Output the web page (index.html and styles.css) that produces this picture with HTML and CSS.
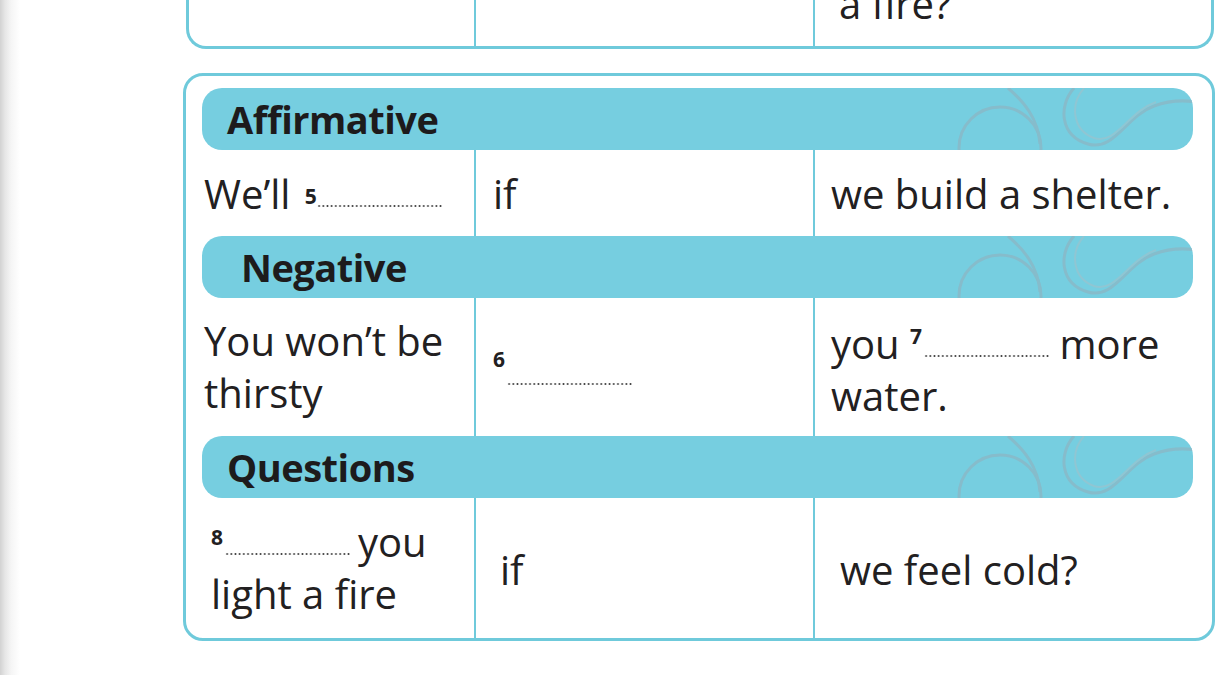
FILE: index.html
```html
<!DOCTYPE html>
<html lang="en">
<head>
<meta charset="utf-8">
<title>First conditional</title>
<link rel="stylesheet" href="styles.css">
</head>
<body>
<div class="page">
  <div class="prev">
    <div class="pcell"></div>
    <div class="pcell line"></div>
    <div class="pcell line"><span class="ptext">a fire?</span></div>
  </div>

  <div class="table">
    <div class="bar">
      <span class="bar-title">Affirmative</span>
      <svg class="deco" viewBox="0 0 991 62" width="991" height="62" aria-hidden="true">
        <circle cx="798" cy="60" r="41"/>
        <path d="M806 0 C 822 14, 836 30, 838 56"/>
        <path d="M872 0 C 856 18, 858 48, 886 56 C 912 64, 924 28, 952 18 C 968 12, 982 12, 995 14"/>
        <path class="thin" d="M882 0 C 868 16, 870 42, 892 50 C 914 57, 926 24, 954 14"/>
      </svg>
    </div>
    <div class="row r1">
      <div class="cell c1"><div class="txt">We’ll <sup class="num n5">5</sup><span class="blank"></span></div></div>
      <div class="cell c2"><div class="txt">if</div></div>
      <div class="cell c3"><div class="txt">we build a shelter.</div></div>
    </div>

    <div class="bar">
      <span class="bar-title indent">Negative</span>
      <svg class="deco" viewBox="0 0 991 62" width="991" height="62" aria-hidden="true">
        <circle cx="798" cy="60" r="41"/>
        <path d="M806 0 C 822 14, 836 30, 838 56"/>
        <path d="M872 0 C 856 18, 858 48, 886 56 C 912 64, 924 28, 952 18 C 968 12, 982 12, 995 14"/>
        <path class="thin" d="M882 0 C 868 16, 870 42, 892 50 C 914 57, 926 24, 954 14"/>
      </svg>
    </div>
    <div class="row r2">
      <div class="cell c1"><div class="txt">You won’t be<br>thirsty</div></div>
      <div class="cell c2"><div class="txt"><sup class="num n6">6</sup><span class="blank"></span></div></div>
      <div class="cell c3"><div class="txt">you <sup class="num n7">7</sup><span class="blank"></span> more<br>water.</div></div>
    </div>

    <div class="bar">
      <span class="bar-title">Questions</span>
      <svg class="deco" viewBox="0 0 991 62" width="991" height="62" aria-hidden="true">
        <circle cx="798" cy="60" r="41"/>
        <path d="M806 0 C 822 14, 836 30, 838 56"/>
        <path d="M872 0 C 856 18, 858 48, 886 56 C 912 64, 924 28, 952 18 C 968 12, 982 12, 995 14"/>
        <path class="thin" d="M882 0 C 868 16, 870 42, 892 50 C 914 57, 926 24, 954 14"/>
      </svg>
    </div>
    <div class="row r3">
      <div class="cell c1"><div class="txt"><sup class="num n8">8</sup><span class="blank gap"></span>you<br>light a fire</div></div>
      <div class="cell c2"><div class="txt">if</div></div>
      <div class="cell c3"><div class="txt">we feel cold?</div></div>
    </div>
  </div>
</div>
</body>
</html>
```

FILE: styles.css
```css
html, body {
  margin: 0;
  padding: 0;
}

body {
  width: 1229px;
  height: 675px;
  overflow: hidden;
  background: linear-gradient(to right, #d2d2d2 0, #e6e6e6 5px, #f5f5f5 11px, #ffffff 20px);
  font-family: "Open Sans", "Noto Sans", "Liberation Sans", sans-serif;
  color: #222021;
}

.page {
  padding-left: 183px;
  width: 1032px;
}

/* previous (cut-off) table */
.prev {
  margin-left: 3px;
  margin-right: 1px;
  height: 46px;
  border: 3px solid #6fcadb;
  border-top: none;
  border-radius: 0 0 20px 20px;
  display: grid;
  grid-template-columns: 285px 339px 1fr;
  overflow: hidden;
}

.pcell.line {
  border-left: 2px solid #6fcadb;
}

.ptext {
  display: block;
  margin-top: -24px;
  padding-left: 24px;
  font-size: 40px;
  line-height: 56px;
}

/* main table */
.table {
  margin-top: 24px;
  border: 3px solid #6fcadb;
  border-radius: 20px;
  padding-top: 12px;
  height: 568px;
  box-sizing: border-box;
  overflow: hidden;
}

.bar {
  position: relative;
  margin: 0 19px 0 16px;
  height: 62px;
  border-radius: 20px;
  background: #76cee0;
  overflow: hidden;
  display: flex;
  align-items: center;
}

.bar-title {
  position: relative;
  z-index: 1;
  padding-left: 25px;
  font-weight: 700;
  font-size: 38px;
  letter-spacing: -0.5px;
  color: #1d1b1c;
}

.bar-title.indent {
  padding-left: 39px;
}

.deco {
  position: absolute;
  left: 0;
  top: 0;
  fill: none;
  stroke: #86bccb;
  stroke-width: 3;
}

.deco .thin {
  stroke: #8fc6d3;
  stroke-width: 2;
}

.row {
  display: grid;
  grid-template-columns: 288px 339px 1fr;
  font-size: 40px;
  line-height: 52px;
}

.r1 { height: 86px; }
.r2 { height: 138px; }
.r3 { height: 140px; }

.cell {
  display: flex;
  align-items: center;
  justify-content: flex-start;
  min-width: 0;
}

.c1 { padding-left: 18px; }
.c2 { border-left: 2px solid #6fcadb; padding-left: 17px; }
.c3 { border-left: 2px solid #6fcadb; padding-left: 16px; }

.r1 .txt { padding-top: 2px; }
.r2 .c2 .txt { padding-top: 10px; }
.r2 .c3 .txt { padding-top: 6px; }

.r3 .c1 { padding-left: 25px; }
.r3 .c2 { padding-left: 24px; }
.r3 .c3 { padding-left: 25px; }
.r3 .c2 .txt, .r3 .c3 .txt { padding-top: 4px; }

.num {
  font-size: 21px;
  font-weight: 700;
  line-height: 0;
  margin-right: 2px;
}

.n5 { vertical-align: 5px; margin-left: 4px; margin-right: 0; }
.n6 { vertical-align: 20px; }
.n7 { vertical-align: 15px; }
.n8 { vertical-align: 12px; }

.blank {
  display: inline-block;
  width: 125px;
  height: 2px;
  vertical-align: 2px;
  background-image: radial-gradient(circle, #444 0.8px, transparent 1.1px);
  background-size: 4.2px 2px;
  background-repeat: repeat-x;
}

.blank.gap {
  margin-right: 8px;
}
```
